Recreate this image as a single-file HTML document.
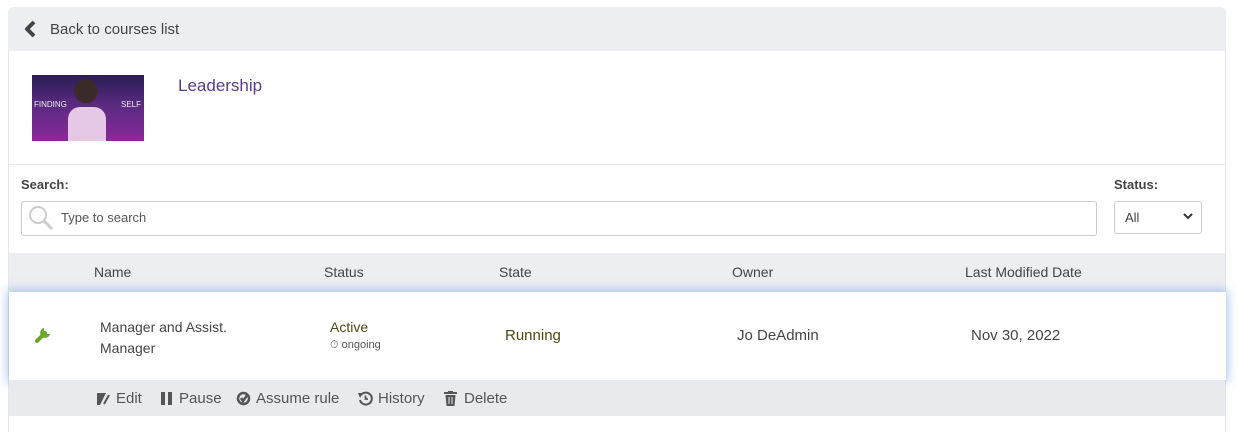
<!DOCTYPE html>
<html><head><style>
*{box-sizing:border-box;margin:0;padding:0}
body{width:1238px;height:432px;background:#fff;font-family:"Liberation Sans",sans-serif;color:#333;position:relative;overflow:hidden}
.card{position:absolute;left:8px;top:7px;width:1218px;height:425px;border-left:1px solid #e6e6e6;border-right:1px solid #e6e6e6;border-radius:6px 6px 0 0}
.hdr{position:absolute;left:8px;top:7px;width:1218px;height:44px;background:#eceef1;border-radius:6px 6px 0 0}
.t{position:absolute;white-space:nowrap}
.line{position:absolute;left:9px;width:1216px;height:1px;background:#e8e8e8;top:164px}
.input{position:absolute;left:21px;top:201px;width:1076px;height:35px;border:1px solid #ccc;border-radius:3px}
.sel{position:absolute;left:1114px;top:201px;width:88px;height:33px;border:1px solid #ccc;border-radius:3px}
.th{position:absolute;left:9px;top:253px;width:1216px;height:40px;background:#eceef1}
.row{position:absolute;left:9px;top:292px;width:1217px;height:88px;background:#fff;box-shadow:0 0 9px 2px rgba(100,150,230,.5)}
.act{position:absolute;left:9px;top:380px;width:1216px;height:36px;background:#e8eaed}
.a{position:absolute;top:390px;font-size:15px;color:#555;white-space:nowrap}
</style></head><body>
<div class="card"></div>
<div class="hdr"></div>
<svg class="t" style="left:23px;top:20px" width="14" height="18" viewBox="0 0 14 18"><path d="M11 2 L4 9 L11 16" stroke="#444" stroke-width="4" fill="none" stroke-linejoin="round"/></svg>
<div class="t" style="left:50px;top:21px;font-size:15px;color:#444">Back to courses list</div>
<div class="t" style="left:32px;top:75px;width:112px;height:66px;background:linear-gradient(180deg,#2a1d55 0%,#5a2a80 45%,#8a2a9a 100%)">
<div style="position:absolute;left:42px;top:4px;width:24px;height:24px;border-radius:50%;background:#3a2a2a"></div>
<div style="position:absolute;left:36px;top:32px;width:38px;height:34px;border-radius:12px 12px 0 0;background:#e4c8e4"></div>
<div style="position:absolute;left:2px;top:25px;font-size:8px;color:#eee">FINDING</div>
<div style="position:absolute;left:89px;top:25px;font-size:8px;color:#eee">SELF</div>
</div>
<div class="t" style="left:178px;top:76px;font-size:17px;color:#5a3c8c">Leadership</div>
<div class="line"></div>
<div class="t" style="left:21px;top:177px;font-size:13px;font-weight:bold;color:#444">Search:</div>
<div class="input"></div>
<svg class="t" style="left:27px;top:204px" width="28" height="28" viewBox="0 0 28 28"><circle cx="11" cy="11" r="8" stroke="#ccc" stroke-width="2" fill="none"/><path d="M17 17 L25 25" stroke="#ccc" stroke-width="3"/></svg>
<div class="t" style="left:61px;top:210px;font-size:13px;color:#555">Type to search</div>
<div class="t" style="left:1114px;top:177px;font-size:13px;font-weight:bold;color:#444">Status:</div>
<div class="sel"></div>
<div class="t" style="left:1125px;top:210px;font-size:13px;color:#444">All</div>
<svg class="t" style="left:1183px;top:212px" width="10" height="8"><path d="M1 2 L5 6 L9 2" stroke="#333" stroke-width="2" fill="none"/></svg>
<div class="th"></div>
<div class="t" style="left:94px;top:264px;font-size:14px;color:#444">Name</div>
<div class="t" style="left:324px;top:264px;font-size:14px;color:#444">Status</div>
<div class="t" style="left:499px;top:264px;font-size:14px;color:#444">State</div>
<div class="t" style="left:732px;top:264px;font-size:14px;color:#444">Owner</div>
<div class="t" style="left:965px;top:264px;font-size:14px;color:#444">Last Modified Date</div>
<div class="row"></div>
<svg class="t" style="left:34px;top:324px" width="20" height="20" viewBox="0 0 20 20"><path d="M3 17 L11 9" stroke="#6aa62a" stroke-width="4" stroke-linecap="round"/><path d="M10 4 A5 5 0 1 0 16 10 L13 10 L10 7 Z" fill="#6aa62a"/></svg>
<div class="t" style="left:100px;top:317px;font-size:14px;line-height:21px;color:#444">Manager and Assist.<br>Manager</div>
<div class="t" style="left:330px;top:319px;font-size:14px;color:#4a4a10">Active</div>
<div class="t" style="left:330px;top:339px;font-size:11px;color:#555">⏱ ongoing</div>
<div class="t" style="left:505px;top:327px;font-size:15px;color:#4a4a10">Running</div>
<div class="t" style="left:737px;top:327px;font-size:15px;color:#444">Jo DeAdmin</div>
<div class="t" style="left:971px;top:327px;font-size:15px;color:#444">Nov 30, 2022</div>
<div class="act"></div>
<svg class="t" style="left:96px;top:392px" width="14" height="14" viewBox="0 0 14 14"><path d="M1 1 H10 L4 13 H1 Z" fill="#555"/><path d="M8 12 L13 3" stroke="#555" stroke-width="2"/></svg>
<div class="a" style="left:116px">Edit</div>
<svg class="t" style="left:161px;top:392px" width="12" height="14"><rect x="0" y="0" width="4" height="13" fill="#555"/><rect x="7" y="0" width="4" height="13" fill="#555"/></svg>
<div class="a" style="left:179px">Pause</div>
<svg class="t" style="left:236px;top:391px" width="15" height="15" viewBox="0 0 15 15"><circle cx="7.5" cy="7.5" r="5.5" stroke="#555" stroke-width="2.5" fill="none"/><path d="M5 7 L7 10 L12 3" stroke="#555" stroke-width="2.5" fill="none"/></svg>
<div class="a" style="left:256px">Assume rule</div>
<svg class="t" style="left:358px;top:391px" width="15" height="15" viewBox="0 0 15 15"><path d="M3 4 A6 6 0 1 1 2 9" stroke="#555" stroke-width="2" fill="none"/><path d="M0 2 L5 2 L2 7 Z" fill="#555"/><path d="M7.5 4.5 V8 H10" stroke="#555" stroke-width="1.8" fill="none"/></svg>
<div class="a" style="left:378px">History</div>
<svg class="t" style="left:444px;top:391px" width="13" height="15" viewBox="0 0 13 15"><rect x="0" y="1" width="13" height="2" fill="#555"/><rect x="4" y="0" width="5" height="2" fill="#555"/><path d="M1.5 4 H11.5 L10.5 15 H2.5 Z" fill="#555"/><path d="M5 6 V13 M8 6 V13" stroke="#e8eaed" stroke-width="1"/></svg>
<div class="a" style="left:464px">Delete</div>
</body></html>
